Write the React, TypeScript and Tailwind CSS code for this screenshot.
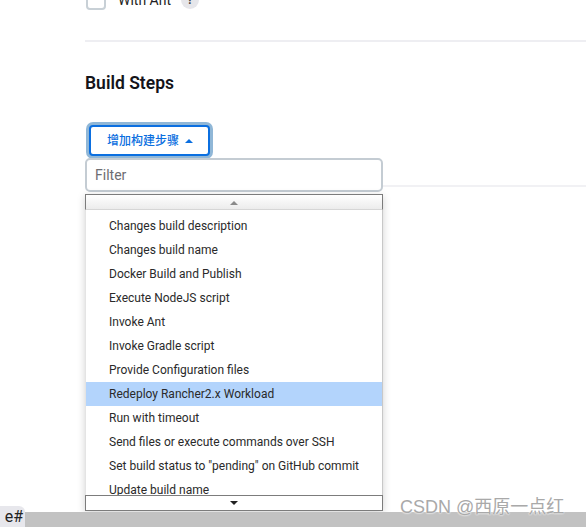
import React from "react";

const steps = [
  "Changes build description",
  "Changes build name",
  "Docker Build and Publish",
  "Execute NodeJS script",
  "Invoke Ant",
  "Invoke Gradle script",
  "Provide Configuration files",
  "Redeploy Rancher2.x Workload",
  "Run with timeout",
  "Send files or execute commands over SSH",
  'Set build status to "pending" on GitHub commit',
  "Update build name",
];

export default function App() {
  const active = "Redeploy Rancher2.x Workload";

  return (
    <div className="relative w-[586px] h-[527px] overflow-hidden bg-white font-['Roboto','Liberation_Sans',sans-serif] text-[#1f1f24]">
      <div className="pl-[85px]">
        {/* previous option row, cut off at the top */}
        <div className="-mt-[10px] flex items-center h-[20px]">
          <div className="ml-[1px] w-[20px] h-[20px] rounded-[4px] border-2 border-[#c8d0d6] bg-white" />
          <span className="ml-[12px] text-[14px] leading-[20px]">With Ant</span>
          <span className="ml-[10px] w-[18px] h-[18px] rounded-full bg-[#e6e6ea] text-[12px] font-bold leading-[18px] text-center text-[#444]">?</span>
        </div>

        <div className="mt-[30px] h-[2px] bg-[#eeeef2]" />

        <h2 className="mt-[29px] text-[17.5px] leading-[24px] font-semibold text-[#14141a]">Build Steps</h2>

        <button className="mt-[30px] ml-[4px] w-[121px] h-[31px] rounded-[4px] border-2 border-[#0b6fe0] bg-white shadow-[0_0_0_3px_#90b7d7] flex items-center pl-[16px] gap-[6px] text-[12px] font-medium text-[#0b6fe0] font-['Roboto','Noto_Sans_CJK_SC',sans-serif]">
          <span>增加构建步骤</span>
          <svg width="8" height="5" viewBox="0 0 8 5" className="mt-[-1px]">
            <path d="M0 5 L4 1 L8 5 Z" fill="#0b6fe0" />
          </svg>
        </button>

        <div className="mt-[29px] h-[2px] bg-[#f1f1f4]" />
      </div>

      {/* dropdown overlay */}
      <div className="absolute left-[85px] top-[158px] w-[298px]">
        <div className="h-[34px] rounded-[5px] border-2 border-[#c4ccd3] bg-white flex items-center pl-[8px] text-[14px] text-[#6d6d72]">
          Filter
        </div>
        <div className="mt-[2px] h-[317px] flex flex-col bg-white shadow-[0_2px_8px_rgba(0,0,0,0.18)]">
          <div className="h-[16px] shrink-0 border border-[#7c7c7c] border-b-[#d6d6d6] bg-gradient-to-b from-white to-[#ececec] flex items-center justify-center">
            <svg width="8" height="5" viewBox="0 0 8 5">
              <path d="M0 5 L4 1 L8 5 Z" fill="#8a8a8a" />
            </svg>
          </div>
          <div className="flex-1 overflow-hidden pt-[4px] border-l border-r border-l-[#e4e4e4] border-r-[#c8c8c8]">
            {steps.map((s) => (
              <div
                key={s}
                className={`h-[24px] pl-[23px] text-[12px] leading-[24px] text-[#2a2a2a] whitespace-nowrap ${
                  s === active ? "bg-[#b3d4fc]" : ""
                }`}
              >
                {s}
              </div>
            ))}
          </div>
          <div className="h-[16px] shrink-0 border border-[#7c7c7c] bg-white flex items-center justify-center">
            <svg width="8" height="5" viewBox="0 0 8 5">
              <path d="M0 0 L8 0 L4 4 Z" fill="#222" />
            </svg>
          </div>
        </div>
      </div>

      {/* browser status bar */}
      <div className="absolute left-0 right-0 bottom-0 h-[15px] bg-[#c2c2c2]">
        <div className="absolute left-0 bottom-0 w-[25px] h-[21px] rounded-tr-[6px] bg-[#e7e7ec] text-[16px] leading-[22px] text-[#222] overflow-hidden whitespace-nowrap flex justify-end pr-[2px]">
          e#
        </div>
      </div>

      {/* watermark */}
      <div className="absolute left-[400px] top-[496px] text-[18px] leading-[22px] text-[#a9a9a9] font-['Liberation_Sans','Noto_Sans_CJK_SC',sans-serif] [text-shadow:0_0_2px_#fff,0_0_2px_#fff]">
        CSDN @西原一点红
      </div>
    </div>
  );
}
